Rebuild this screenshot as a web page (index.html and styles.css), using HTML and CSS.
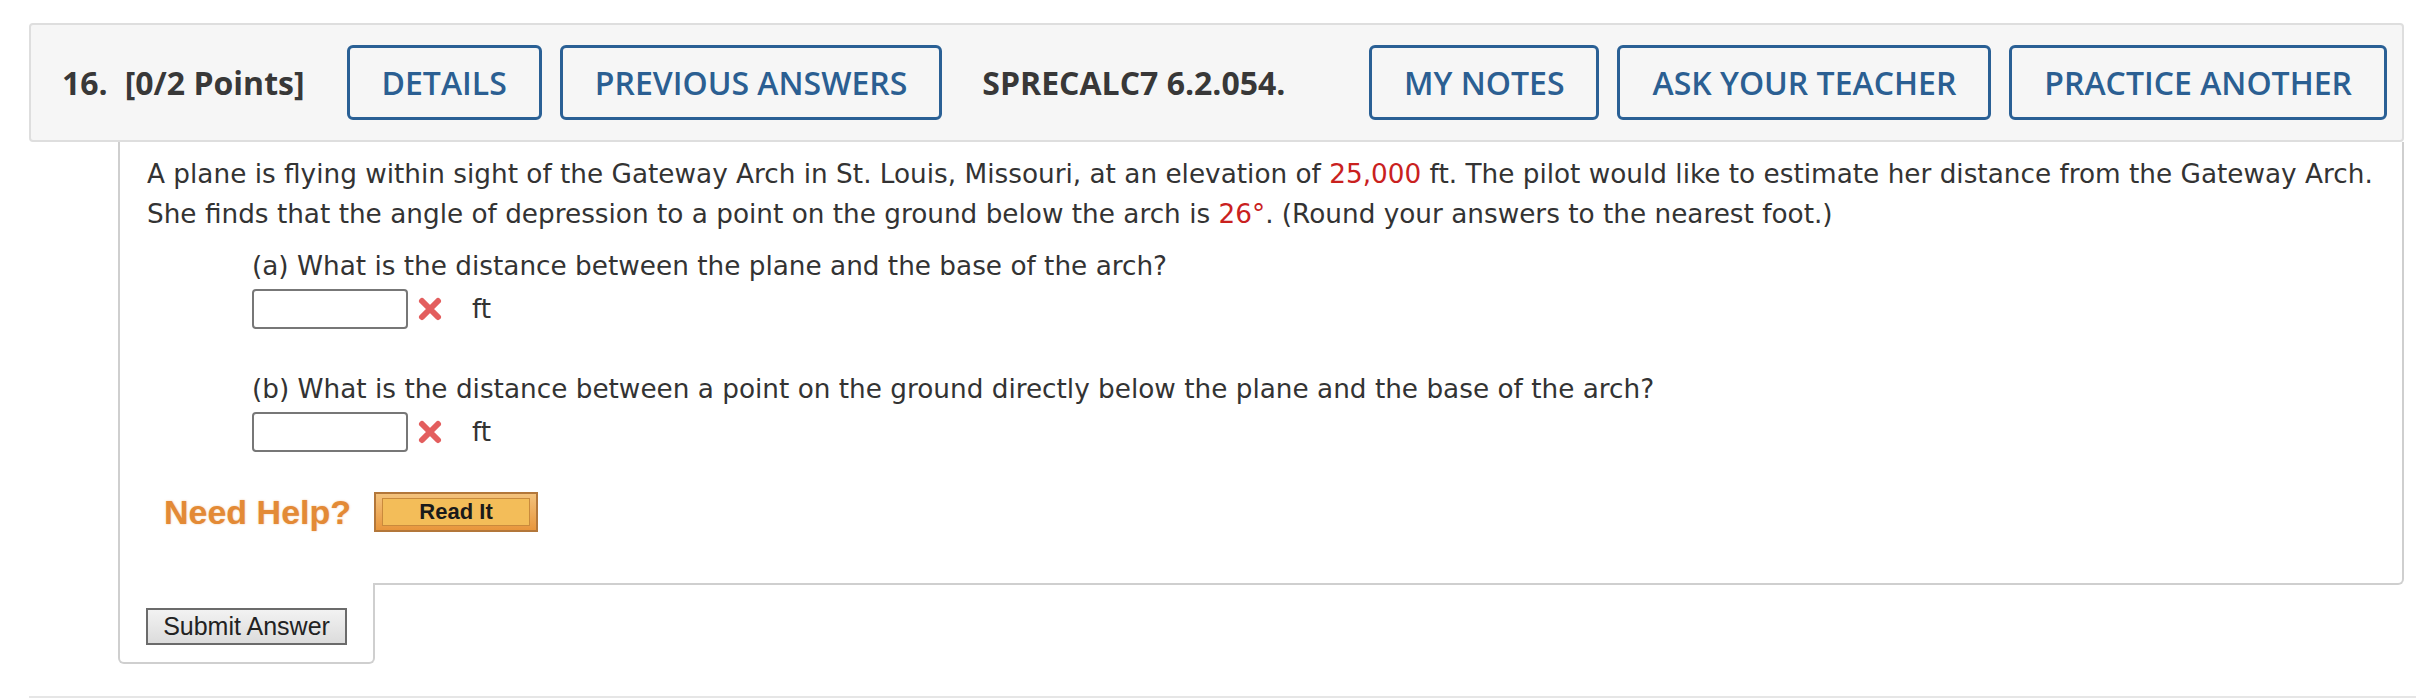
FILE: index.html
```html
<!DOCTYPE html>
<html lang="en">
<head>
    <meta charset="UTF-8">
    <meta name="viewport" content="width=device-width, initial-scale=1.0">
    <title>Question 16</title>
    <link rel="stylesheet" href="styles.css">
</head>
<body>
    <div class="page">
        <div class="question-header">
            <span class="qnum">16.</span>
            <span class="points">[0/2 Points]</span>
            <button class="hbtn">DETAILS</button>
            <button class="hbtn">PREVIOUS ANSWERS</button>
            <span class="ref">SPRECALC7 6.2.054.</span>
            <span class="spacer"></span>
            <button class="hbtn">MY NOTES</button>
            <button class="hbtn">ASK YOUR TEACHER</button>
            <button class="hbtn">PRACTICE ANOTHER</button>
        </div>

        <div class="question-body">
            <p class="prompt">A plane is flying within sight of the Gateway Arch in St. Louis, Missouri, at an elevation of <span class="red">25,000</span> ft. The pilot would like to estimate her distance from the Gateway Arch. She finds that the angle of depression to a point on the ground below the arch is <span class="red">26&deg;</span>. (Round your answers to the nearest foot.)</p>

            <div class="part">
                <div class="part-text">(a) What is the distance between the plane and the base of the arch?</div>
                <div class="answer">
                    <input type="text" class="answer-box">
                    <svg class="wrong" width="28" height="28" viewBox="0 0 28 28"><path d="M6 6 L22 22 M22 6 L6 22" stroke="#e35e5e" stroke-width="6" stroke-linecap="round"/></svg>
                    <span class="unit">ft</span>
                </div>
            </div>

            <div class="part">
                <div class="part-text">(b) What is the distance between a point on the ground directly below the plane and the base of the arch?</div>
                <div class="answer">
                    <input type="text" class="answer-box">
                    <svg class="wrong" width="28" height="28" viewBox="0 0 28 28"><path d="M6 6 L22 22 M22 6 L6 22" stroke="#e35e5e" stroke-width="6" stroke-linecap="round"/></svg>
                    <span class="unit">ft</span>
                </div>
            </div>

            <div class="help">
                <span class="need-help">Need Help?</span>
                <span class="read-it"><span class="read-it-inner">Read It</span></span>
            </div>
        </div>
        <div class="submit-tab">
            <button class="submit">Submit Answer</button>
        </div>
        <div class="rule"></div>
    </div>
</body>
</html>
```

FILE: styles.css
```css
body {
    margin: 0;
    background-color: #fff;
    font-family: "DejaVu Sans", Verdana, sans-serif;
    color: #333;
}
.page {
    padding: 23px 12px 0 29px;
}
.question-header {
    display: flex;
    align-items: center;
    padding: 20px 15px 20px 31px;
    background-color: #f6f6f6;
    border: 2px solid #dedede;
    border-radius: 4px;
    font-family: "Open Sans", sans-serif;
}
.qnum, .points, .ref {
    font-size: 32px;
    font-weight: 700;
    color: #383838;
}
.points {
    margin-left: 17px;
    margin-right: 42px;
}
.ref {
    margin-left: 22px;
}
.spacer {
    flex: 1;
}
.hbtn {
    height: 75px;
    padding: 0 32px;
    margin-right: 18px;
    background: transparent;
    border: 3px solid #2a6095;
    border-radius: 6px;
    font-family: "Open Sans", sans-serif;
    font-size: 32px;
    font-weight: 600;
    color: #2b5f92;
}
.hbtn:last-child {
    margin-right: 0;
}
.question-body {
    margin-left: 89px;
    padding: 12px 0 51px 27px;
    border: 2px solid #cfcfcf;
    border-top: none;
    border-bottom-right-radius: 6px;
    font-size: 26.3px;
    line-height: 40px;
}
.prompt {
    margin: 0;
}
.red {
    color: #c9211e;
}
.part {
    margin: 12px 0 0 105px;
}
.part + .part {
    margin-top: 40px;
}
.answer {
    display: flex;
    align-items: center;
    margin-top: 3px;
}
.answer-box {
    box-sizing: border-box;
    width: 156px;
    height: 40px;
    border: 2px solid #777;
    border-radius: 4px;
}
.wrong {
    margin-left: 8px;
}
.unit {
    margin-left: 28px;
    line-height: 30px;
}
.help {
    display: flex;
    align-items: center;
    margin: 40px 0 0 17px;
    line-height: normal;
}
.need-help {
    font-family: "Liberation Sans", Arial, sans-serif;
    font-size: 34px;
    font-weight: 700;
    color: #e38a36;
    text-shadow: 0 0 2px rgba(227, 138, 54, 0.5);
}
.read-it {
    box-sizing: border-box;
    width: 164px;
    height: 40px;
    margin-left: 23px;
    padding: 4px 6px;
    background: linear-gradient(#f3c27c, #e8963c);
    border: 2px solid #b3773a;
}
.read-it-inner {
    display: block;
    height: 100%;
    box-sizing: border-box;
    background-color: #f3bd59;
    border: 1px solid #c98a3c;
    text-align: center;
    font-family: "Liberation Sans", Arial, sans-serif;
    font-size: 22px;
    font-weight: 700;
    line-height: 26px;
    color: #1a1a1a;
}
.submit-tab {
    box-sizing: border-box;
    width: 257px;
    margin: -2px 0 0 89px;
    padding: 25px 0 17px 26px;
    background-color: #fff;
    border: 2px solid #cfcfcf;
    border-top: none;
    border-radius: 0 0 6px 6px;
}
.submit {
    width: 201px;
    height: 37px;
    padding: 0;
    background: linear-gradient(#f2f2f2, #dcdcdc);
    border: 2px solid #6b6b6b;
    border-radius: 0;
    font-family: "Liberation Sans", Arial, sans-serif;
    font-size: 25px;
    color: #222;
}
.rule {
    height: 2px;
    margin: 32px -12px 0 0;
    background-color: #e6e6e6;
}
```
